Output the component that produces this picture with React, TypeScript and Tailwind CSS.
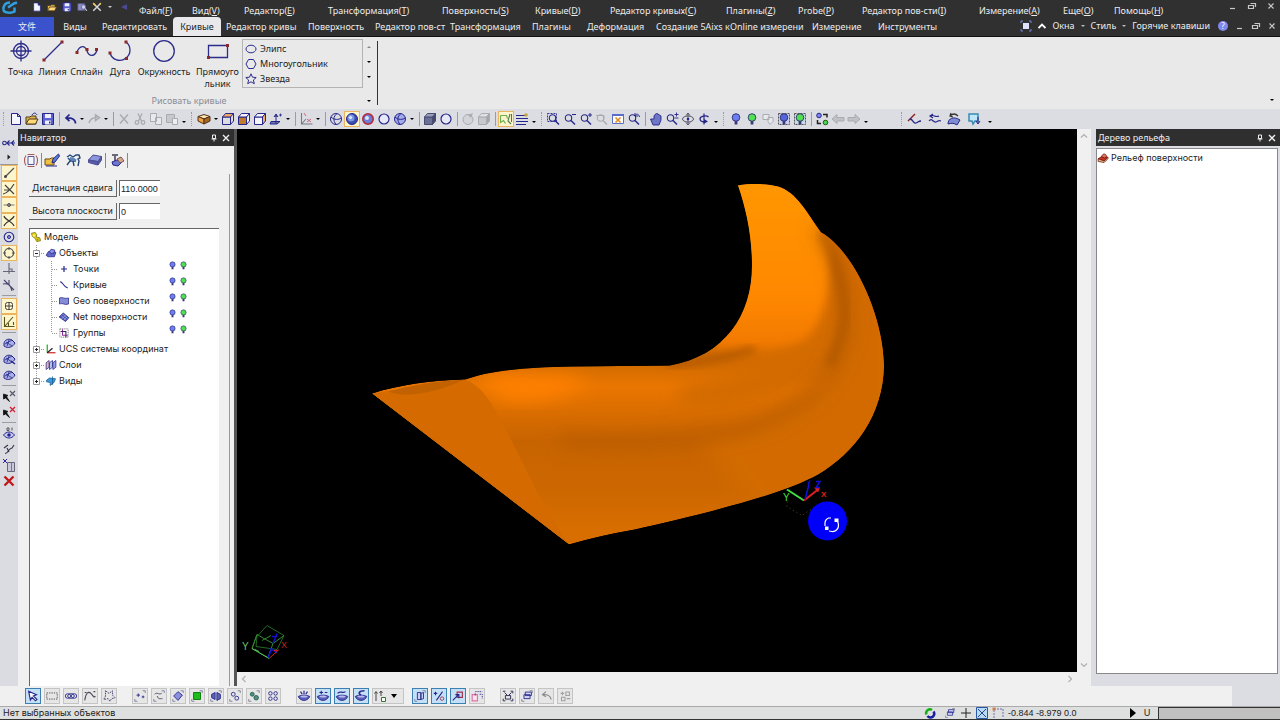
import type { ReactNode } from "react";

const N = "#26268a";
const G = "#a9abb0";

const zoomGlass = (mark: ReactNode, color = N) => (
  <>
    <circle cx="6.5" cy="7" r="3.2" fill="none" stroke={color} strokeWidth="1.1" />
    <path d="M9 9.5l4 4" stroke={color} strokeWidth="1.5" />
    {mark}
  </>
);

const bulb = (fill: string) => (
  <>
    <circle cx="8" cy="6.5" r="3.8" fill={fill} stroke="#2c2c70" strokeWidth="0.9" />
    <path d="M6.6 10h2.8v3.5H6.6z" fill="#3a3a78" />
  </>
);

const cube = (front: string, top: string, side: string, stroke = N) => (
  <g stroke={stroke} strokeWidth="1" strokeLinejoin="round">
    <path d="M2.5 6h8v7.5h-8z" fill={front} />
    <path d="M2.5 6l3-3.5h8L10.500 6z" fill={top} />
    <path d="M10.5 6l3-3.5V10l-3 3.500z" fill={side} />
  </g>
);

const patch = (extra: ReactNode = null) => (
  <>
    <path d="M3 9c0-4 4-6 8-4l3 3c-2 4-7 6-11 3z" fill="#a9aee4" stroke={N} strokeWidth="1" />
    <path d="M5 7l6 4M4 9l7-4M8 5l-2 6" stroke={N} strokeWidth="0.8" fill="none" />
    {extra}
  </>
);

const bowl = (top: ReactNode) => (
  <>
    <path d="M1.500 8.500c2 6 11 6 13 0-3-2-10-2-13 0z" fill="#5a60b8" stroke={N} strokeWidth="1" />
    <ellipse cx="8" cy="8.5" rx="4" ry="1.2" fill="#b8bcf0" />
    {top}
  </>
);

const corners = <path d="M2 11.500V14h3M11 2h3v2.500" fill="none" stroke="#7a7a9a" strokeWidth="1" />;

const ICONS: Record<string, ReactNode> = {
  doc: <path d="M3.500 2.500h6l3 3v8h-9zM9.500 2.500v3h3" fill="#f4f5ff" stroke={N} />,
  open: (
    <>
      <path d="M2 6h4l1-1h5v8H2z" fill="#e2b44c" stroke="#4a3a1c" />
      <path d="M2 13l3-5h9l-2.500 5z" fill="#ffd977" stroke="#4a3a1c" />
      <path d="M8 4c2-3 4-2 5 0" fill="none" stroke={N} />
    </>
  ),
  save: (
    <>
      <path d="M2.500 2.500h11v11h-11z" fill="#5b62cf" stroke={N} />
      <path d="M5 3h6v4H5zM5 9.500h6v4H5z" fill="#eef" />
      <path d="M9 10.500h1.500v2H9z" fill={N} />
    </>
  ),
  print: (
    <>
      <path d="M2.500 3.500h9v9h-9z" fill="#8d8fc0" stroke="#55588a" />
      <circle cx="10" cy="8" r="3" fill="#c9cbf0" stroke="#55588a" />
      <path d="M12 10l2.500 3" stroke="#ddd" strokeWidth="1.500" />
    </>
  ),
  tools: (
    <>
      <path d="M3 13L13 3M3 3l10 10" stroke="#d8d8d8" strokeWidth="2" />
      <path d="M3 3l3 3M13 3l-2 2" stroke="#f0c040" strokeWidth="2" />
    </>
  ),
  undo: <path d="M13.500 12.500c0-4-4-6-9-5.500M7.500 3.500L4 7l3.500 3" fill="none" stroke={N} strokeWidth="1.700" />,
  redo: <path d="M3 12c1-4 4-5.500 8-5.500M9.500 4l4 2.500-4 3z" fill="none" stroke={G} strokeWidth="1.500" />,
  cross: <path d="M4 3.500l8 9M12 3.500l-8 9" stroke={G} strokeWidth="1.5" />,
  cut: (
    <g fill="none" stroke={G} strokeWidth="1.3">
      <path d="M10 2.500L6.500 10M6 2.500L9.500 10" />
      <circle cx="5" cy="11.500" r="1.8" />
      <circle cx="11" cy="11.500" r="1.8" />
    </g>
  ),
  copy: <path d="M2.500 2.500h6v8h-6zM7.500 6.500h6v7h-6z" fill="#e8e9ec" stroke={G} />,
  paste: (
    <g stroke={G}>
      <path d="M2.500 3.500h8v8h-8z" fill="#c6c8cc" />
      <path d="M8.500 7.500h5v6h-5z" fill="#eee" />
    </g>
  ),
  iso: (
    <g stroke="#4a3320" strokeLinejoin="round">
      <path d="M2 5.500l6-2 6 2-6 2.500z" fill="#ffe0b0" />
      <path d="M2 5.500L8 8v5l-6-3z" fill="#f0a040" />
      <path d="M14 5.500L8 8v5l6-3z" fill="#a8641c" />
    </g>
  ),
  cubeTop: (
    <g stroke={N} strokeLinejoin="round">
      <path d="M2.500 6h8v7.500h-8zM10.500 13.500l3-3.500V2.500" fill="none" />
      <path d="M2.500 6l3-3.500h8L10.500 6z" fill="#f0a860" />
    </g>
  ),
  cubeFront: cube("#c07a2c", "#f4f4fa", "#f4f4fa"),
  cubeSide: cube("#f4f4fa", "#f4f4fa", "#f0b060"),
  axis: (
    <>
      <path d="M8 12.500V4M6 6l2-3 2 3M3 10.500h9l-3 2.500H2z" fill="#7077b4" stroke={N} strokeWidth="1" />
      <path d="M11 4h3M12.500 2.500v3" stroke={N} strokeWidth="0.800" />
    </>
  ),
  ucs: (
    <>
      <path d="M3.500 2v11h11M3.500 13L8 8" fill="none" stroke="#77798a" strokeWidth="1.100" />
      <path d="M9 8l4 3M13 8l-4 3M6 2l2 3" stroke="#c86a7a" />
    </>
  ),
  globe: (
    <g fill="none" stroke={N} strokeWidth="1">
      <circle cx="8" cy="8" r="5.500" />
      <path d="M3 6c3 3 8 3 10 1M9 2.500c-4 3-4 7-1 11" />
    </g>
  ),
  ball: (
    <>
      <circle cx="8" cy="8" r="5.500" fill="#3a4cae" stroke={N} />
      <circle cx="7" cy="7" r="3.500" fill="#7c96e4" />
      <circle cx="6.500" cy="6.500" r="1.600" fill="#dce8ff" />
    </>
  ),
  redball: (
    <>
      <circle cx="8" cy="8" r="5.200" fill="#6a7cd4" stroke="#b82838" strokeWidth="1.600" />
      <circle cx="7" cy="7" r="2" fill="#dfe6ff" />
    </>
  ),
  ring: <circle cx="8" cy="8" r="5" fill="#e6e8f8" stroke={N} strokeWidth="1.200" />,
  wireball: (
    <>
      <circle cx="8" cy="8" r="5.500" fill="#a3abea" stroke={N} />
      <path d="M3 6c3 3 8 3 10 1M9 2.500c-4 3-4 7-1 11" fill="none" stroke={N} />
    </>
  ),
  solid: cube("#6a6f96", "#989dbe", "#474b70", "#474b70"),
  greyball: (
    <>
      <circle cx="8" cy="8.500" r="5" fill="#d2d4d8" stroke={G} />
      <path d="M8 4l5-2-2 5z" fill={G} />
    </>
  ),
  greycube: cube("#c6c8cc", "#dddfe2", "#a4a6ab", G),
  mark: (
    <>
      <path d="M2.500 4.500h6l1 3M2.500 4.500v7l3-2 2 3" fill="none" stroke="#6cae50" strokeWidth="1.200" />
      <path d="M12 3l-2 7 3 3M13.500 3v8" fill="none" stroke="#4e7a48" strokeWidth="1.100" />
    </>
  ),
  lines: (
    <>
      <path d="M2 4.500h9M2 7.500h12M2 10.500h12M2 13.500h10" stroke={N} strokeWidth="1.100" />
      <circle cx="12" cy="4" r="1.800" fill="#c0a040" />
    </>
  ),
  zoomWin: zoomGlass(<path d="M1.500 2.500h9v8h-9z" fill="none" stroke={N} strokeDasharray="2 1" strokeWidth="0.900" />),
  zoomOut: zoomGlass(<path d="M10 3.500h4" stroke={N} />),
  zoomIn: zoomGlass(<path d="M10 4h4M12 2v4" stroke={N} />),
  zoomGrey: zoomGlass(<path d="M2 4.500h8v4" fill="none" stroke={G} />, G),
  fit: (
    <>
      <path d="M2.500 3.500h11v9h-11z" fill="#fff" stroke="#5a6ccc" />
      <path d="M2 3h12v2H2z" fill="#5a6ccc" />
      <path d="M5.500 6.500l5 5M10.500 6.500l-5 5" stroke="#e08a20" strokeWidth="1.600" />
    </>
  ),
  zoomPrev: zoomGlass(<path d="M9 5c1-3 4-2 4.500 1M9 2v3h3" fill="none" stroke={N} />),
  hand: <path d="M2.500 8l2.500 6h6l2-5V5l-1.500-1L10 3 8.500 2.500 7 3.500 6 5v3z" fill="#6c76c4" stroke={N} strokeWidth="0.900" />,
  zoomPm: zoomGlass(<path d="M10.500 3.500h4M12.500 1.500v4M10.500 7h4" stroke={N} strokeWidth="0.900" />),
  orbit: (
    <>
      <ellipse cx="8" cy="8" rx="5.500" ry="3" fill="none" stroke="#556" />
      <path d="M8 2v12M6 4.500l2-2.500 2 2.500M6 11.500L8 14l2-2.500" fill="none" stroke="#556" />
      <circle cx="8" cy="8" r="1.300" fill={N} />
    </>
  ),
  rotate: (
    <>
      <path d="M8 2.500v11" stroke={N} strokeWidth="1.200" />
      <path d="M12.500 6c-2-2-8.500-1-8.500 2s4 3 6 2.500" fill="none" stroke={N} strokeWidth="1.300" />
      <path d="M8 8l4 2.500-4 2z" fill={N} />
    </>
  ),
  bulbBlue: bulb("#6a7ef0"),
  bulbGreen: bulb("#50e050"),
  bulbGrey: <path d="M3 3.500h6v5H3zM8 6.500h5v4l-3 3-2-3z" fill="#e8e9ec" stroke={G} />,
  bulbBoxB: (
    <>
      <path d="M2.500 2.500h11v11h-11z" fill="#c8d0ee" stroke="#555" strokeDasharray="2 1" />
      {bulb("#5566d8")}
    </>
  ),
  bulbBoxG: (
    <>
      <path d="M2.500 2.500h11v11h-11z" fill="#c8d8e4" stroke="#555" strokeDasharray="2 1" />
      {bulb("#50e050")}
    </>
  ),
  swap: (
    <>
      <circle cx="5" cy="4.500" r="2.300" fill="#7a86ee" stroke={N} />
      <circle cx="11.500" cy="11.500" r="2.300" fill="#50d050" stroke="#186018" />
      <path d="M9 3.500h4v3M3.500 9v3.500H7" fill="none" stroke="#222" strokeWidth="1.500" />
    </>
  ),
  arrL: <path d="M2 8l5-4.500v3h7v3.500H7v2.500z" fill="#bfc1c6" stroke={G} />,
  arrR: <path d="M14 8L9 3.500v3H2V10h7v2.500z" fill="#bfc1c6" stroke={G} />,
  crvA: (
    <>
      <path d="M2 10L9 3" stroke="#902020" strokeWidth="1.400" />
      <path d="M4 8c3 0 3 5 6 4s2-2 5-2" fill="none" stroke={N} strokeWidth="1.300" />
    </>
  ),
  crvB: <path d="M5 5c3-2 4 2 8 0M3 10c3-4 4 2 7 1s2-2 5-1M7 3l-3 2 3 2" fill="none" stroke={N} strokeWidth="1.200" />,
  crvC: (
    <>
      <path d="M2 13c0-6 6-8 12-4l-3 5c-3-2-5-2-9-1z" fill="#7f8ed0" stroke={N} />
      <path d="M4 5c3-3 6-2 8 0M5 2L4 5l3 1" fill="none" stroke="#333" strokeWidth="1.200" />
    </>
  ),
  crvD: (
    <>
      <path d="M3 3h9v7H9l-2 3-1-3H3z" fill="#bfe6f6" stroke="#3a8ab4" strokeWidth="1.500" />
      <path d="M12 6v6M10 10l2 3 2-3" fill="none" stroke={N} />
    </>
  ),
  link: (
    <g fill="none" stroke={N} strokeWidth="1.100">
      <circle cx="3.500" cy="8" r="1.800" />
      <path d="M6 8h8M8.500 5.500L6 8l2.500 2.500M13 5.500L10.500 8l2.500 2.500" />
    </g>
  ),
  play: <path d="M6 4.500l4 3.500-4 3.500z" fill="#222" />,
  snapEnd: (
    <>
      <path d="M4.500 11.500L13 3" stroke="#555" strokeWidth="1.300" />
      <circle cx="4.500" cy="11.500" r="1.500" fill="#444" />
    </>
  ),
  snapNear: <path d="M2 13C7 12 10 8 13 3M4 4l9 9M3 9l5 0" fill="none" stroke="#444" strokeWidth="1.200" />,
  snapMid: (
    <>
      <path d="M2.500 8h11" stroke="#777" />
      <circle cx="8" cy="8" r="1.500" fill="#888" stroke="#555" />
    </>
  ),
  snapX: <path d="M3 3c1 4 9 6 10 10M13 3c-1 4-9 6-10 10" fill="none" stroke="#333" strokeWidth="1.200" />,
  snapCen: (
    <>
      <circle cx="8" cy="8" r="4.800" fill="none" stroke={N} strokeWidth="1.100" />
      <circle cx="8" cy="8" r="1.500" fill="#9a9ee0" stroke={N} />
    </>
  ),
  snapQ: (
    <>
      <circle cx="8" cy="8" r="4.500" fill="none" stroke="#444" strokeWidth="1.200" />
      <path d="M8 2l1.500 1.500L8 5 6.500 3.500zM8 11l1.500 1.500L8 14l-1.500-1.500zM3.500 6.500L5 8 3.500 9.500 2 8zM12.500 6.500L14 8l-1.500 1.500L11 8z" fill="#555" />
    </>
  ),
  perp: <path d="M2 10.500h12M8 2v11M8 8h3v2.500" fill="none" stroke="#667" strokeWidth="1.100" />,
  tang: <path d="M3 3l10 10M2 7c5-1 8 1 9 7M8 3v5" fill="none" stroke="#44446a" strokeWidth="1.100" />,
  grid: (
    <>
      <rect x="4.500" y="4.500" width="7" height="7" rx="2" fill="none" stroke="#444" />
      <path d="M8 4v8M4 8h8" stroke="#444" />
    </>
  ),
  dims: <path d="M3.500 3v9.500h10M4 12L12 3M7.500 12V9M12.500 8v3" fill="none" stroke="#55551a" strokeWidth="1.100" />,
  patch: patch(),
  patchB: patch(<path d="M10 10l4 3" stroke={N} strokeWidth="1.500" />),
  pickX: (
    <>
      <path d="M2.500 6v5l2-1 4 3.500-3-5 1.500-1z" fill="#111" stroke="#111" strokeWidth="0.800" />
      <path d="M9 3l5 5M14 3L9 8" stroke="#556" strokeWidth="1.100" />
    </>
  ),
  pickRed: (
    <>
      <path d="M2.500 6v5l2-1 4 3.500-3-5 1.500-1z" fill="#111" stroke="#111" strokeWidth="0.800" />
      <path d="M9 3l5 5M14 3L9 8" stroke="#d22030" strokeWidth="1.300" />
    </>
  ),
  eye: (
    <>
      <path d="M2.500 10c3-4 8-4 11 0-3 4-8 4-11 0z" fill="#c8caf0" stroke={N} />
      <circle cx="8" cy="10" r="1.800" fill={N} />
      <path d="M6 3h2v2.500H6zM11 2.500v3" fill="none" stroke="#555" />
    </>
  ),
  trim: <path d="M3 7l4-3M4 12.500c4 0 2-4 7-5.500l2-3M6 7l2 4" fill="none" stroke="#334" strokeWidth="1.100" />,
  list: (
    <>
      <path d="M6.500 5.500h7v9h-7z" fill="#c8cadc" stroke="#667" />
      <path d="M10.500 5.500v9" stroke="#778" />
      <path d="M2 2l4 4M6 2L2 6" stroke={N} />
    </>
  ),
  del: <path d="M3.500 3.500l9 9M12.500 3.500l-9 9" stroke="#c01818" strokeWidth="2.400" />,
  frame: (
    <>
      <path d="M5 4.500h6v8H5z" fill="#f6f6ff" stroke="#55559a" />
      <path d="M3 3.500C1 6 1 11 3 13.500M13 3.500c2 2.500 2 7.500 0 10M4.500 2.500h7M4.500 14.500h7" fill="none" stroke="#a85858" strokeWidth="1.100" />
    </>
  ),
  sketch: (
    <>
      <path d="M1 7h5l1-1h3v7H1z" fill="#f0c040" stroke="#6a5010" />
      <path d="M14.500 2L9 7l-1 4 3-1 4.500-6z" fill="#5a80d0" stroke={N} />
      <path d="M2 14h11" stroke={N} />
    </>
  ),
  horse: (
    <>
      <path d="M2 5l3-2 3 2 3-2 3 0 1 3-2 1 1 2-1 5M5 9l-3 4M8 9l1 5M3 6l3 3h5" fill="none" stroke="#28487a" strokeWidth="1.400" />
      <path d="M5 5l4 1 3 2-3 1-4-1z" fill="#5c86b8" />
    </>
  ),
  slab: (
    <>
      <path d="M1.500 8l4.500-5 8.500 1.500L11 9.500z" fill="#8d95dc" stroke="#4a4f90" />
      <path d="M1.500 8v2.500l9 2.500v-3.500zM11 9.500V13l3.500-5V4.500z" fill="#565cae" stroke="#4a4f90" />
    </>
  ),
  robot: (
    <>
      <path d="M3 3h6M6 3v7" fill="none" stroke="#6a6a78" strokeWidth="2" />
      <path d="M3 10l5-2 5 2-4 4-5-1z" fill="#6f76d0" stroke={N} />
      <path d="M8 7l4-2 3 4-4 2z" fill="#d8a888" stroke="#755" />
    </>
  ),
  model: (
    <>
      <path d="M2 3l5-1 2 3-1 3 5 1 1 4-5 1-2-4-4-3z" fill="#e8d820" stroke="#706400" />
      <circle cx="5" cy="6" r="1.500" fill="#fff890" />
      <circle cx="10" cy="11.500" r="1.500" fill="#a89a10" />
    </>
  ),
  objects: (
    <>
      <path d="M1.500 11l3-5h5l5 1-2 6H4z" fill="#6068c8" stroke={N} />
      <path d="M6 6l2-3 5 1-1 4-4 1z" fill="#8e94e0" stroke={N} />
    </>
  ),
  point: <path d="M8 4v8M4 8h8" stroke={N} strokeWidth="1.600" />,
  curve: <path d="M3 3.500c4 1 4 7 10 8.500" fill="none" stroke={N} strokeWidth="1.400" />,
  geo: <path d="M2 4c4-2 7 2 12 0v8c-5 2-8-2-12 0z" fill="#868cd6" stroke={N} />,
  net: (
    <>
      <path d="M1.500 8L7 2.500 14.500 9 10 14z" fill="#4a52b0" stroke={N} />
      <path d="M4 6l7 6M6 4l7 6M4 11l6-5M7 13l5-5" stroke="#b4b8ee" strokeWidth="0.800" />
    </>
  ),
  group: (
    <>
      <path d="M2.500 2.500h11v11h-11z" fill="none" stroke="#555" strokeDasharray="1.500 1" />
      <path d="M6 3v8h7" fill="none" stroke="#9030a0" strokeWidth="1.400" />
      <path d="M3.500 6h7v8" fill="none" stroke="#402060" strokeWidth="1.400" />
    </>
  ),
  axes: (
    <>
      <path d="M3 13V2" stroke="#18b018" strokeWidth="1.600" />
      <path d="M3 13h11" stroke="#d02020" strokeWidth="1.600" />
      <path d="M3 13l7-6" stroke="#222" strokeWidth="1.600" />
    </>
  ),
  layers: (
    <g stroke={N}>
      <path d="M1.500 5l4-3v9l-4 3z" fill="#e8b0b0" />
      <path d="M6 5l4-3v9l-4 3z" fill="#a8c8f0" />
      <path d="M10.500 5l4-3v9l-4 3z" fill="#9aa2e8" />
    </g>
  ),
  views: (
    <>
      <path d="M2 7l4-3 8 1-2 5-5 4 0-4-5-1z" fill="#3a9ad8" stroke="#145a90" />
      <path d="M10 2v11" stroke="#145a90" />
    </>
  ),
  relief: (
    <>
      <path d="M1.500 9l5-3 8 1-5 5z" fill="#c83020" stroke="#701008" />
      <path d="M6 6c2-5 6-4 7 0l-3 2z" fill="#d87858" stroke="#701008" />
      <path d="M1.500 9v3.500l8 1.500 5-5V7l-5 5z" fill="#e0c890" stroke="#701008" />
    </>
  ),
  select: <path d="M3 2.500l9 4-3.500 1.500 4 4-1.700 1.500-3.800-4-2 3z" fill="#fff" stroke={N} strokeWidth="1.300" />,
  marquee: <path d="M2 4.500h12v7H2z" fill="none" stroke="#444" strokeDasharray="1.500 1.200" />,
  chain: (
    <g fill="none" stroke={N}>
      <rect x="1.500" y="5.500" width="13" height="5" rx="2.500" />
      <circle cx="6" cy="8" r="1.800" />
      <circle cx="10" cy="8" r="1.800" />
    </g>
  ),
  path: <path d="M2 13C3 5 6 2 9 5s4 6 5 3M2 4h2M12 3h2" fill="none" stroke="#445" strokeWidth="1.200" />,
  star: <path d="M4 2l4 3 4-3v5l3 3-4 1-2 3-2-3-5 1 2-4z" fill="none" stroke="#3a3a6a" strokeDasharray="2 1" />,
  selPt: <>{corners}<path d="M4 7h4M6 5v4M10 9h3M11.500 7.500v3" stroke={N} /></>,
  selCv: <>{corners}<path d="M3 6c3-3 4 1 8-1M6 8c1 4 3 3 6 3" fill="none" stroke="#445" /></>,
  selSf: <>{corners}<path d="M3 8l5-5 5 4-5 6z" fill="#8a90dc" stroke={N} /></>,
  selGr: <>{corners}<path d="M4 4h8v8H4z" fill="#18c018" stroke="#0c700c" /></>,
  selSd: <>{corners}<path d="M3 6l4-2v8l-4-2zM9 4l4 2v5l-4 2z" fill="#5c64b8" stroke={N} /></>,
  selLk: <>{corners}<circle cx="6" cy="6" r="2.200" fill="none" stroke={N} /><circle cx="10" cy="10.500" r="2.200" fill="none" stroke={N} /></>,
  selDt: <>{corners}<circle cx="6" cy="6" r="2.200" fill="#5a8a80" stroke="#265" /><circle cx="10.500" cy="10" r="2.600" fill="#5a8a80" stroke="#265" /></>,
  selFr: (
    <g fill="none" stroke={N}>
      <circle cx="5" cy="5" r="2" />
      <circle cx="11" cy="5" r="2" />
      <circle cx="5" cy="11" r="2" />
      <circle cx="11" cy="11" r="2" />
    </g>
  ),
  bowlA: bowl(<path d="M4 3l2 3M8 2v4M12 3l-2 3" stroke={N} strokeWidth="1.400" />),
  bowlB: bowl(<path d="M4 4h4M6 2v4M10 4h3" stroke={N} strokeWidth="1.200" />),
  bowlC: bowl(<path d="M3 5c3-4 5 1 9-2" fill="none" stroke={N} strokeWidth="1.400" />),
  bowlD: bowl(<path d="M12 2c-6 0-8 3-4 5" fill="none" stroke={N} strokeWidth="1.800" />),
  order: (
    <>
      <path d="M3 4v9M1.500 5.500L3 3.500l1.500 2M8 3v5M6.500 5L8 3l1.500 2" fill="none" stroke="#444" />
      <path d="M8.500 9.500h4v4h-4z" fill="#fff" stroke="#2a7a2a" />
    </>
  ),
  fA: <>{corners}<path d="M5 4h4v8H5zM9 5l3-1v7l-3 1z" fill="#c8d0f4" stroke={N} /></>,
  fB: (
    <>
      <path d="M2 5h4M4 3v4M12 3L5 13" stroke={N} strokeWidth="1.200" />
      <circle cx="11.500" cy="11" r="2" fill="none" stroke="#a03050" />
    </>
  ),
  fC: (
    <>
      <path d="M7 3.500h6v6H7z" fill="none" stroke="#a03050" strokeWidth="1.300" />
      <path d="M2 13l6-6M5 6.500h4v4" fill="none" stroke={N} strokeWidth="1.300" />
    </>
  ),
  fD: (
    <>
      <path d="M2.500 6.500h6v7h-6z" fill="#fbe6f0" stroke="#e070a8" strokeWidth="1.300" />
      <path d="M6 3h8M11 6h3v5M6 5v3" fill="none" stroke={N} strokeDasharray="1.500 1" />
    </>
  ),
  gA: <path d="M2.500 3v-.5H5M11 2.500h2.500V5M2.500 11v2.500H5M13.500 11v2.500H11M4 4l3 3M12 4L9 7M5 7.500h6v4H5z" fill="none" stroke="#2b2b50" strokeWidth="1.100" />,
  gB: <>{corners}<path d="M6 3.500h7v4H6zM4.500 6.500h7v4.500h-7z" fill="#d4d6f4" stroke={N} /></>,
  gC: <path d="M14 12c-1-4-5-6-9-5.500M8 3L4 6.500 8 9" fill="none" stroke="#8a8a8a" strokeWidth="1.300" />,
  gD: <path d="M3 5h4M5 3v4M9 3.500h4v4H9zM4 9.500h4v4H4zM10 11h4" fill="none" stroke="#a0a0a0" strokeWidth="1.200" />,
};

const Icon = ({ name, className = "size-4" }: { name: string; className?: string }) => (
  <svg viewBox="0 0 16 16" className={`${className} shrink-0`} aria-hidden="true">
    {ICONS[name]}
  </svg>
);

const MENU: [string, string, string][] = [
  ["Файл", "F", "w-[53px]"],
  ["Вид", "V", "w-[52px]"],
  ["Редактор", "E", "w-[84px]"],
  ["Трансформация", "T", "w-[114px]"],
  ["Поверхность", "S", "w-[93px]"],
  ["Кривые", "D", "w-[75px]"],
  ["Редактор кривых", "C", "w-[116px]"],
  ["Плагины", "Z", "w-[72px]"],
  ["Probe", "P", "w-[64px]"],
  ["Редактор пов-сти", "I", "w-[117px]"],
  ["Измерение", "A", "w-[84px]"],
  ["Еще", "O", "w-[51px]"],
  ["Помощь", "H", "w-[60px]"],
];

const TABS: [string, string][] = [
  ["Редактор кривы", "w-[82px]"],
  ["Поверхность", "w-[67px]"],
  ["Редактор пов-ст", "w-[75px]"],
  ["Трансформация", "w-[82px]"],
  ["Плагины", "w-[55px]"],
  ["Деформация", "w-[69px]"],
  ["Создание 5Aixs к", "w-[74px]"],
  ["Online измерени", "w-[82px]"],
  ["Измерение", "w-[66px]"],
  ["Инструменты", "w-[66px]"],
];

const TOOLBAR =
  "grip doc open save | undo v redo v | cross cut copy paste . grip iso v cubeTop cubeFront cubeSide axis v | ucs v | globe ball! redball ring wireball v | solid ring | greyball greycube | mark! lines . grip zoomWin zoomOut zoomIn zoomGrey fit zoomPrev | hand zoomPm orbit rotate . grip bulbBlue bulbGreen bulbGrey bulbBoxB bulbBoxG | swap arrL arrR .";

const SIDE =
  "snapEnd! snapNear! snapMid! snapX! snapCen snapQ! perp tang | grid! dims! | patch patchB patch | pickX pickRed | eye trim list del";

const BOTTOM = [
  "select! marquee chain path star",
  "selPt selCv selSf selGr selSd selLk selDt selFr",
  "bowlA bowlB! bowlC! bowlD!",
];

const Caret = () => <span className="block h-0 w-0 border-x-2 border-t-2 border-x-transparent border-t-black" />;

const ToolItem = ({ id }: { id: string }) => {
  if (id === "|") return <span className="flex w-1.5 shrink-0 justify-center"><span className="h-3.5 w-px bg-[#9a9ca2]" /></span>;
  if (id === "grip") return <span className="mx-[3px] h-3.5 w-0.5 shrink-0 border-l border-dotted border-[#9a9ca2]" />;
  if (id === "v") return <button aria-label="Список" className="flex w-2 shrink-0 justify-center"><Caret /></button>;
  if (id === ".") return <button aria-label="Параметры панели" className="flex w-2 shrink-0 justify-center pt-1.5"><Caret /></button>;
  const on = id.endsWith("!");
  const name = on ? id.slice(0, -1) : id;
  return (
    <button aria-label={name} className={`flex size-4 shrink-0 items-center justify-center ${on ? "bg-[#fdf6cc] outline outline-1 -outline-offset-1 outline-[#ecb45c]" : ""}`}>
      <Icon name={name} />
    </button>
  );
};

const BottomButton = ({ id }: { id: string }) => {
  const on = id.endsWith("!");
  const name = on ? id.slice(0, -1) : id;
  return (
    <button aria-label={name} className={`flex size-4 shrink-0 items-center justify-center border ${on ? "border-[#3c7fb1] bg-[#c4e0f6]" : "border-[#c4c4c4] bg-[#e6e6e6]"}`}>
      <Icon name={name} className="size-3.5" />
    </button>
  );
};

const WindowButtons = ({ cell }: { cell: string }) => (
  <div className="flex items-center text-[#c8c8c8]">
    {["M2 7.500h5", "M3.500 2.500h5v3.500M1.500 4.500h5v3h-5z", "M2.500 2.500l5 5M7.500 2.500l-5 5"].map((d, i) => (
      <button key={d} aria-label={["Свернуть", "Восстановить", "Закрыть"][i]} className={`flex justify-center ${cell}`}>
        <svg viewBox="0 0 10 10" className="size-2.5"><path d={d} fill="none" stroke="currentColor" strokeWidth="1.200" /></svg>
      </button>
    ))}
  </div>
);

const RIBBON: { label: string[]; w: string; art: ReactNode }[] = [
  { label: ["Точка"], w: "w-[33px]", art: <><circle cx="12" cy="12" r="7.500" /><circle cx="12" cy="12" r="4.500" /><path d="M1.500 12h21M12 1.500v21" /></> },
  { label: ["Линия"], w: "w-[31px]", art: <><path d="M3 21L21 3" /><path d="M1.500 19.500h3v3h-3zM19.500 1.500h3v3h-3z" fill="#8a2a2a" stroke="none" /></> },
  { label: ["Сплайн"], w: "w-[37px]", art: <><path d="M2 13c3-7 8-7 10-1s8 6 10-1" /><path d="M.500 12h3v3h-3zM10.500 9h3v3h-3zM20 9h3v3h-3z" fill="#8a2a2a" stroke="none" /></> },
  { label: ["Дуга"], w: "w-[30px]", art: <><path d="M2 14a10 10 0 0 0 16 5M18 3a10 10 0 0 1 0 16" /><path d="M.500 12.500h3v3h-3zM16.500 1.500h3v3h-3zM17 18h3v3h-3z" fill="#8a2a2a" stroke="none" /></> },
  { label: ["Окружность"], w: "w-[58px]", art: <circle cx="12" cy="12" r="10.300" /> },
  { label: ["Прямоуго", "льник"], w: "w-[49px]", art: <><path d="M2.500 6.500h19v12h-19z" /><path d="M1 17h3v3H1zM20 5h3v3h-3z" fill="#8a2a2a" stroke="none" /></> },
];

const GALLERY: [string, ReactNode][] = [
  ["Элипс", <ellipse cx="6" cy="6" rx="5" ry="3.800" key="e" />],
  ["Многоугольник", <path d="M3.500 1.500h5L11 6l-2.500 4.500h-5L1 6z" key="p" />],
  ["Звезда", <path d="M6 .800l1.500 3.400 3.700.300-2.800 2.500.900 3.700L6 8.800l-3.300 1.900.900-3.700L.800 4.500l3.700-.300z" key="s" />],
];

const PanelTitle = ({ children }: { children: string }) => (
  <div className="flex h-[17px] shrink-0 items-center gap-1 bg-[#2f2f2f] pr-1 pl-0.5 font-['Noto_Sans',sans-serif] text-[9px] text-[#f0f0f0]">
    <h2 className="grow">{children}</h2>
    <button aria-label="Закрепить"><svg viewBox="0 0 8 8" className="size-2"><path d="M2.500 1h3v3.500h-3zM1.500 5h5M4 5v2.500" fill="none" stroke="#eee" /></svg></button>
    <button aria-label="Закрыть"><svg viewBox="0 0 8 8" className="size-2"><path d="M1 1l6 6M7 1L1 7" stroke="#eee" strokeWidth="1.400" /></svg></button>
  </div>
);

const Expander = ({ open, last }: { open?: boolean; last?: boolean }) => (
  <svg viewBox="0 0 15 16" className="h-4 w-[15px] shrink-0" aria-hidden="true">
    <path d={last ? "M6.500 0v8M7 8.500h8" : "M6.500 0v16M7 8.500h8"} stroke="#999" strokeDasharray="1 1" />
    <path d="M3.500 5.500h6v6h-6z" fill="#fff" stroke="#999" />
    <path d={open ? "M5 8.500h3" : "M5 8.500h3M6.500 7v3"} stroke="#222" />
  </svg>
);

const LEAVES: [string, string][] = [
  ["Точки", "point"],
  ["Кривые", "curve"],
  ["Geo поверхности", "geo"],
  ["Net поверхности", "net"],
  ["Группы", "group"],
];

const Branch = ({ icon, label, open, last }: { icon: string; label: string; open?: boolean; last?: boolean }) => (
  <li className="flex h-4 items-center">
    <Expander open={open} last={last} />
    <Icon name={icon} className="mr-0.5 size-3" />
    {label}
  </li>
);

const Tree = () => (
  <ul className="leading-4 text-[#222]">
    <li className="flex h-4 items-center gap-0.5"><Icon name="model" className="size-3" />Модель</li>
    <Branch icon="objects" label="Объекты" open />
    {LEAVES.map(([label, icon], i) => (
      <li key={label} className="flex h-4 items-center">
        <svg viewBox="0 0 28 16" className="h-4 w-7 shrink-0" aria-hidden="true">
          <path d={i === 4 ? "M6.500 0v16M21.500 0v8M22 8.500h6" : "M6.500 0v16M21.500 0v16M22 8.500h6"} stroke="#999" strokeDasharray="1 1" />
        </svg>
        <Icon name={icon} className="mr-[3px] size-3" />
        <span className="grow whitespace-nowrap">{label}</span>
        <span className="mr-[30px] flex pb-2">
          <Icon name="bulbBlue" className="size-[11px]" />
          <Icon name="bulbGreen" className="size-[11px]" />
        </span>
      </li>
    ))}
    <Branch icon="axes" label="UCS системы координат" />
    <Branch icon="layers" label="Слои" />
    <Branch icon="views" label="Виды" last />
  </ul>
);

const BODY =
  "M372 393C400 384 430 380 465 379C490 370 525 367 570 366L670 365C725 355 752 315 752 265C752 235 746 208 738 185C750 183 766 183 778 186C797 192 806 211 821 232C850 247 883 310 884 365C883 415 855 452 818 474C780 495 690 517 635 529Q600 535 569 544Z";

const Scene = () => (
  <svg viewBox="237 129 840 542" className="block h-full w-full bg-black" role="img" aria-label="Поверхность">
    <defs>
      <linearGradient id="skin" x1="0" y1="366" x2="0" y2="530" gradientUnits="userSpaceOnUse">
        <stop offset="0" stopColor="#d46c00" />
        <stop offset="0.120" stopColor="#ea7600" />
        <stop offset="0.450" stopColor="#c86400" />
        <stop offset="0.750" stopColor="#cc6700" />
        <stop offset="1" stopColor="#d86e00" />
      </linearGradient>
      <linearGradient id="horn" x1="0" y1="184" x2="0" y2="370" gradientUnits="userSpaceOnUse">
        <stop offset="0" stopColor="#ff9600" />
        <stop offset="0.600" stopColor="#ff8800" />
        <stop offset="0.850" stopColor="#f27a00" />
        <stop offset="1" stopColor="#d86c00" stopOpacity="0" />
      </linearGradient>
      <filter id="soft" x="-30%" y="-30%" width="160%" height="160%"><feGaussianBlur stdDeviation="9" /></filter>
      <filter id="fine" x="-30%" y="-30%" width="160%" height="160%"><feGaussianBlur stdDeviation="4" /></filter>
      <clipPath id="shape"><path d={BODY} /></clipPath>
    </defs>
    <g clipPath="url(#shape)">
      <path d={BODY} fill="url(#skin)" />
      <path d="M820 225L900 260V480L760 520L700 440Q840 400 850 320Z" fill="#d26a00" filter="url(#soft)" />
      <path d="M475 376Q540 370 590 380Q560 404 505 400Z" fill="#ff8000" filter="url(#soft)" />
      <path d="M680 385Q760 372 815 345L822 375Q760 410 680 408Z" fill="#d26a00" filter="url(#soft)" />
      <path d="M700 150H800L830 240Q834 310 806 338Q775 355 715 350Z" fill="url(#horn)" filter="url(#fine)" />
      <path d="M818 225Q850 280 846 330Q834 400 745 428Q660 446 560 440" fill="none" stroke="#ae5500" strokeWidth="14" strokeOpacity="0.550" filter="url(#soft)" />
      <path d="M822 232Q846 280 844 320Q840 345 828 365" fill="none" stroke="#a65100" strokeWidth="10" strokeOpacity="0.600" filter="url(#fine)" />
      <path d="M668 364Q715 361 755 348" fill="none" stroke="#9c4c00" strokeWidth="7" strokeOpacity="0.700" filter="url(#fine)" />
      <path d="M372 393L465 379Q484 386 498 416C522 455 540 505 569 544Z" fill="#d56a00" />
      <path d="M388 391Q430 380 465 379Q440 390 420 393Q400 396 388 391Z" fill="#c26100" />
    </g>
    <g fill="none">
      <path d="M804 500L787 489" stroke="#40e040" strokeWidth="2" />
      <path d="M804 500l14-11" stroke="#e02020" strokeWidth="2" />
      <path d="M814 487l6 0-2 5z" fill="#e02020" />
      <path d="M805 499l4-15M808 484l2-4M816 481l4 0-4 6h4" stroke="#1010e0" strokeWidth="1.500" />
      <path d="M787 501l0 5 15 9 18-12" stroke="#5c4a20" strokeDasharray="1 3" />
    </g>
    <text x="821" y="496" fill="#e02020" fontSize="8" fontWeight="700" fontFamily="Liberation Sans">X</text>
    <text x="783" y="500" fill="#40e040" fontSize="10" fontFamily="Liberation Sans">Y</text>
    <circle cx="827.500" cy="520.500" r="19.500" fill="#0000fa" />
    <path d="M831 517.500h-2.500a6 6 0 0 0-3.500 6v2M832 531a6 6 0 0 0 6.500-6.500c0-2-.500-3-1.500-4M829 530.500l3 .500" fill="none" stroke="#fff" strokeWidth="1.200" />
    <path d="M834.500 518h4v3.500h-4zM825 526h3.500v3.500H825z" fill="#fff" />
    <g fill="none" strokeWidth="1">
      <path d="M267 625l17 10-7 14-21-3 1-10z" stroke="#206a20" />
      <path d="M257 634l16 9-5 14-16-9zM273 643l11-8M252 648l5-14M262 640l9-5" stroke="#308a30" />
      <path d="M252 648l17 10M255 649l4 2" stroke="#58c058" />
      <path d="M273 643l4-10M272 648l-4 9M272 636l5 0M270 648l7 4" stroke="#1010d0" strokeWidth="1.500" />
      <path d="M269 658l10-9M274 650l4 0" stroke="#d02020" />
    </g>
    <text x="242" y="649" fill="#70c070" fontSize="10" fontFamily="Liberation Sans">Y</text>
    <text x="281" y="647" fill="#c02020" fontSize="9" fontFamily="Liberation Sans">X</text>
  </svg>
);

const ScrollArrow = ({ d, label }: { d: string; label: string }) => (
  <button aria-label={label} className="flex size-3.5 items-center justify-center">
    <svg viewBox="0 0 8 8" className="size-2"><path d={d} fill="none" stroke="#b0b0b0" strokeWidth="1.200" /></svg>
  </button>
);

export default function App() {
  return (
    <div className="flex h-screen flex-col overflow-hidden bg-[#f0f0f0] font-['Noto_Sans','Noto_Sans_CJK_SC',sans-serif] text-[9px] leading-3 text-[#222]">
      <header className="flex shrink-0 flex-col bg-[#303030] text-[#ececec]">
        <div className="flex h-[17px] items-center">
          <svg viewBox="0 0 20 16" className="h-4 w-5 shrink-0" aria-hidden="true">
            <path d="M10 1.500C5 1.500 3 5 3.500 9c.500 3 8 3.500 11 1.500V6.500M8 6.500l6-4 3-1" fill="none" stroke="#2f9fe0" strokeWidth="2.500" />
          </svg>
          <div className="flex w-[119px] shrink-0 items-center pb-1 pl-[9px]">
            {["doc", "open", "save", "print", "tools"].map((n) => (
              <button key={n} aria-label={n} className="flex w-[15px] justify-center"><Icon name={n} className="size-3" /></button>
            ))}
            <button aria-label="Ещё" className="flex w-3 justify-center"><span className="h-0 w-0 border-x-2 border-t-2 border-x-transparent border-t-[#ccc]" /></button>
            <button aria-label="Назад" className="ml-1"><svg viewBox="0 0 8 8" className="size-2"><path d="M7 1v6L1 4z" fill="#4a4a90" /></svg></button>
          </div>
          <nav className="flex grow pt-1">
            {MENU.map(([label, key, w]) => (
              <button key={label} className={`${w} shrink-0 text-left whitespace-nowrap`}>
                {label}(<u>{key}</u>)
              </button>
            ))}
          </nav>
          <div className="pb-1.5"><WindowButtons cell="w-[19px]" /></div>
        </div>
        <div className="flex h-[19px] items-stretch">
          <button className="w-[54px] shrink-0 bg-[#3a53cc] text-center">文件</button>
          <button className="w-[42px] shrink-0 text-center">Виды</button>
          <button className="w-[77px] shrink-0 text-center whitespace-nowrap">Редактировать</button>
          <button className="w-[48px] shrink-0 rounded-t-sm bg-[#e9e9ec] text-center text-[#222]">Кривые</button>
          <div className="flex grow pl-[5px]">
            {TABS.map(([label, w]) => (
              <button key={label} className={`${w} shrink-0 text-left whitespace-nowrap`}>{label}</button>
            ))}
          </div>
          <div className="flex shrink-0 items-center gap-1 pb-0.5">
            <svg viewBox="0 0 12 12" className="mr-0.5 size-3" aria-hidden="true">
              <path d="M3 3h6v6H3z" fill="#dfe2ff" />
              <path d="M1 3V1h2M9 1h2v2M1 9v2h2M9 11h2V9" fill="none" stroke="#6f86e8" />
            </svg>
            <button aria-label="Свернуть ленту" className="mr-0.5"><svg viewBox="0 0 8 8" className="size-2"><path d="M.500 6L4 2.500 7.500 6" fill="none" stroke="#fff" strokeWidth="1.800" /></svg></button>
            <button className="flex items-center gap-1 whitespace-nowrap">Окна<span className="mx-0.5 h-0 w-0 border-x-2 border-t-2 border-x-transparent border-t-[#bbb]" /></button>
            <button className="flex items-center gap-1 whitespace-nowrap">Стиль<span className="mx-0.5 h-0 w-0 border-x-2 border-t-2 border-x-transparent border-t-[#bbb]" /></button>
            <button className="whitespace-nowrap">Горячие клавиши</button>
            <button aria-label="Справка" className="ml-1 flex size-2.5 items-center justify-center rounded-full bg-[#8088f0] text-[8px] text-white">?</button>
            <WindowButtons cell="w-4" />
          </div>
        </div>
      </header>

      <section className="flex h-[73px] shrink-0 border-t border-[#111] bg-[#e9e9e9] pt-0.5" aria-label="Лента">
        <div className="flex">
          <div className="flex flex-col">
            <div className="flex grow pl-1">
              {RIBBON.map(({ label, w, art }) => (
                <button key={label[0]} className={`${w} flex shrink-0 flex-col items-center`}>
                  <svg viewBox="0 0 24 24" className="mb-[3px] size-6" fill="none" stroke="#2c2c8c" strokeWidth="1.300" aria-hidden="true">{art}</svg>
                  {label.map((line) => <span key={line} className="whitespace-nowrap">{line}</span>)}
                </button>
              ))}
              <ul className="h-[49px] w-[121px] border border-[#b4b4b4] pt-px pl-0.5">
                {GALLERY.map(([label, art]) => (
                  <li key={label}>
                    <button className="flex h-[15px] items-center gap-[3px]">
                      <svg viewBox="0 0 12 12" className="size-3" fill="none" stroke="#2c2c8c" aria-hidden="true">{art}</svg>
                      {label}
                    </button>
                  </li>
                ))}
              </ul>
            </div>
            <h2 className="pl-[15px] text-center leading-4 text-[#8a8c98]">Рисовать кривые</h2>
          </div>
          <div className="flex w-3 flex-col items-center gap-[13px] pt-[7px] pb-[7px]">
            <button aria-label="Вверх"><span className="block h-0 w-0 border-x-2 border-b-2 border-x-transparent border-b-[#888]" /></button>
            <button aria-label="Вниз"><Caret /></button>
            <button aria-label="Все фигуры"><Caret /></button>
            <button aria-label="Параметры группы" className="mt-auto"><Caret /></button>
          </div>
          <span className="mt-0.5 mr-px mb-1 ml-0.5 w-px bg-[#333]" />
        </div>
        <div className="flex grow items-end justify-end pr-1.5 pb-2"><Caret /></div>
      </section>

      <div className="flex h-5 shrink-0 items-center bg-[#dcdde2]" role="toolbar" aria-label="Инструменты">
        {TOOLBAR.split(" ").map((id, i) => <ToolItem key={i} id={id} />)}
        <span className="w-7" />
        <ToolItem id="grip" />
        <div className="flex items-center gap-1">
          {["crvA", "crvB", "crvC", "crvD", "."].map((id) => <ToolItem key={id} id={id} />)}
        </div>
      </div>

      <main className="flex min-h-0 grow">
        <div className="flex w-[18px] shrink-0 flex-col items-center bg-[#dadce2]" role="toolbar" aria-label="Привязки">
          <div className="flex h-9 w-full flex-col items-center border-b border-[#999] pt-1.5">
            <Icon name="link" />
            <Icon name="play" className="size-3" />
          </div>
          {SIDE.split(" ").map((id, i) =>
            id === "|" ? (
              <span key={i} className="my-0.5 h-px w-3.5 bg-[#9a9ca2]" />
            ) : (
              <ToolItem key={i} id={id} />
            ),
          )}
        </div>

        <aside className="flex w-[216px] shrink-0 flex-col font-[Inter,'Liberation_Sans',sans-serif]">
          <PanelTitle>Навигатор</PanelTitle>
          <div className="flex h-7 shrink-0 items-center pl-0.5" role="tablist">
            {["frame", "sketch", "horse", "slab", "robot"].map((n, i) => (
              <button key={n} role="tab" aria-label={n} aria-selected={n === "frame"} className={`flex h-[15px] items-center justify-center border-r ${i === 1 || i === 2 ? "w-[21px] border-transparent" : "w-[22px] border-[#888]"}`}><Icon name={n} /></button>
            ))}
          </div>
          <div className="mr-1 flex min-h-0 grow flex-col border-r border-[#999] pt-1.5 pr-2.5 pl-[11px]">
            <div className="flex h-[23px] shrink-0 items-start gap-0.5">
              <button id="shift" className="h-[17px] w-[88px] shrink-0 border-r border-b border-[#666] whitespace-nowrap">Дистанция сдвига</button>
              <input aria-labelledby="shift" defaultValue="110.0000" className="h-4 w-[41px] border-t border-l border-[#666] bg-white pl-px font-['Liberation_Sans',sans-serif]" />
            </div>
            <div className="flex h-[25px] shrink-0 items-start gap-0.5">
              <button id="height" className="h-[17px] w-[88px] shrink-0 border-r border-b border-[#666] whitespace-nowrap">Высота плоскости</button>
              <input aria-labelledby="height" defaultValue="0" className="h-4 w-[41px] border-t border-l border-[#666] bg-white pl-px font-['Liberation_Sans',sans-serif]" />
            </div>
            <div className="min-h-0 grow border-t border-l border-[#666] bg-white">
              <Tree />
            </div>
          </div>
        </aside>

        <section className="flex min-w-0 grow flex-col border-l-[3px] border-[#555] bg-[#f0f0f0]" aria-label="Вид модели">
          <div className="flex min-h-0 grow">
            <div className="min-h-0 min-w-0 grow bg-black"><Scene /></div>
            <div className="flex w-3.5 shrink-0 flex-col justify-between">
              <ScrollArrow label="Вверх" d="M1 5.500L4 2.500l3 3" />
              <ScrollArrow label="Вниз" d="M1 2.500l3 3 3-3" />
            </div>
          </div>
          <div className="flex h-3.5 shrink-0 justify-between pr-3.5">
            <ScrollArrow label="Влево" d="M5.500 1l-3 3 3 3" />
            <ScrollArrow label="Вправо" d="M2.500 1l3 3-3 3" />
          </div>
        </section>

        <aside className="flex w-[189px] shrink-0 flex-col border-l-[5px] border-[#dcdde2] bg-[#dcdde2] pb-3">
          <PanelTitle>Дерево рельефа</PanelTitle>
          <ul className="mt-0.5 mr-0.5 grow border border-[#888] bg-white font-[Inter,'Liberation_Sans',sans-serif]">
            <li className="flex h-[18px] items-center gap-0.5"><Icon name="relief" className="size-3" />Рельеф поверхности</li>
          </ul>
        </aside>
      </main>

      <div className="flex h-5 shrink-0 bg-[#dcdde2]">
        <div className="mr-12 flex grow items-center bg-[#f0f0f0] pl-[25px]" role="toolbar" aria-label="Выбор">
          {BOTTOM.map((g) => (
            <div key={g} className="mr-[15px] flex gap-[3px]">
              {g.split(" ").map((id) => <BottomButton key={id} id={id} />)}
            </div>
          ))}
          <button aria-label="Порядок" className="-ml-3 flex h-4 w-8 items-center justify-between border border-[#c4c4c4] bg-[#e6e6e6] pr-1.5">
            <Icon name="order" />
            <span className="h-0 w-0 border-x-[3px] border-t-4 border-x-transparent border-t-black" />
          </button>
          <div className="ml-2 flex gap-[3px]">
            {["fA!", "fB!", "fC!", "fD"].map((id) => <BottomButton key={id} id={id} />)}
          </div>
          <div className="ml-[15px] flex gap-[3px]">
            {["gA", "gB", "gC", "gD"].map((id) => <BottomButton key={id} id={id} />)}
          </div>
        </div>
      </div>

      <footer className="flex h-[14px] shrink-0 items-center border-t border-b border-t-[#aaa] border-b-[#333] bg-[#dedfdf] pl-[3px] font-[Inter,'Liberation_Sans',sans-serif]">
        <span className="grow whitespace-nowrap">Нет выбранных объектов</span>
        <div className="flex shrink-0 items-center gap-1">
          <svg viewBox="0 0 12 12" className="mr-1 size-3" aria-hidden="true">
            <path d="M2.500 7.500a3.700 3.700 0 0 1 5.500-4.500" fill="none" stroke="#18b018" strokeWidth="2.600" />
            <path d="M9.500 4.500a3.700 3.700 0 0 1-6 4.500" fill="none" stroke="#1820a0" strokeWidth="2.600" />
          </svg>
          <Icon name="gB" className="size-3" />
          <svg viewBox="0 0 12 12" className="size-3" aria-hidden="true"><path d="M6 1v10M1 6h10" stroke="#222" /></svg>
          <svg viewBox="0 0 12 12" className="size-3" aria-hidden="true"><path d="M.500.500h11v11H.500z" fill="#b8d8f4" stroke="#2858a8" /><path d="M2 2l8 8M10 2l-8 8" stroke="#204890" /></svg>
          <svg viewBox="0 0 12 12" className="size-3" aria-hidden="true"><path d="M2 11V2h9v9" fill="none" stroke="#7070b0" strokeDasharray="2 1" /><path d="M.500.500h3v3h-3z" fill="#d08050" /></svg>
          <output className="w-[118px] font-['Liberation_Sans',sans-serif] whitespace-nowrap">-0.844 -8.979 0.0</output>
          <button aria-label="Запуск"><svg viewBox="0 0 6 10" className="h-2.5 w-1.5"><path d="M0 0v10l6-5z" fill="#000" /></svg></button>
          <button className="w-[14px] text-center">U</button>
          <div className="h-3 w-[122px] border-t border-l border-[#333] bg-[#c0c0c0]" />
        </div>
      </footer>
    </div>
  );
}
